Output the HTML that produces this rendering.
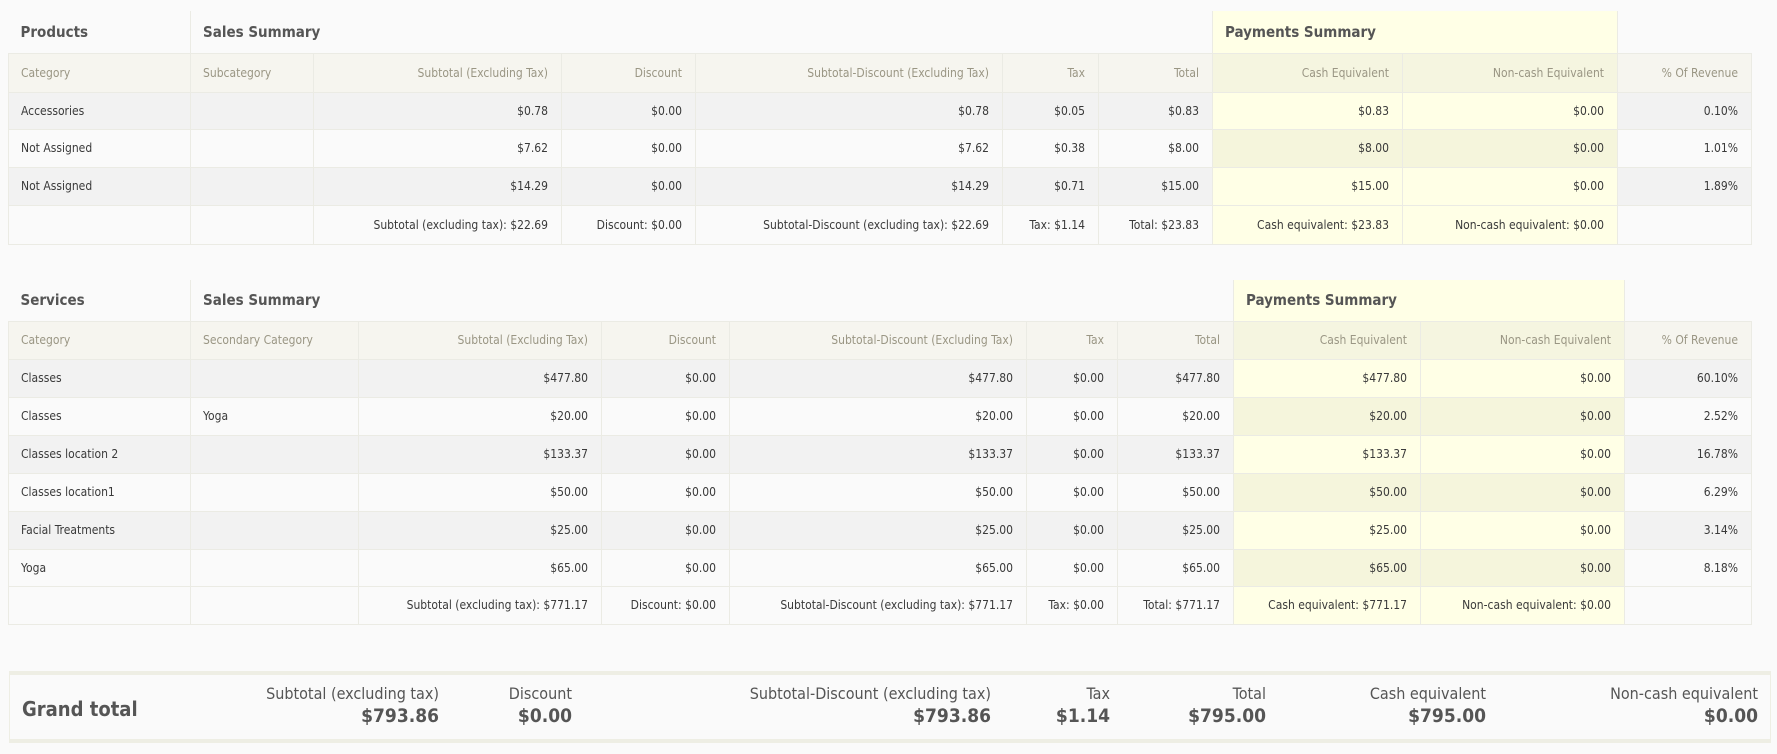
<!DOCTYPE html>
<html><head><meta charset="utf-8"><style>
*{box-sizing:border-box;margin:0;padding:0}
body{width:1777px;height:754px;background:#fafafa;font-family:"DejaVu Sans Condensed","Liberation Sans",sans-serif;color:#3a3a3a;position:relative;overflow:hidden}
table{border-collapse:collapse;table-layout:fixed;position:absolute;left:8px;font-size:12px}
td{border:1px solid #ebebe4;padding:0 13px 0 12px;text-align:right;white-space:nowrap;overflow:hidden}
td.l{text-align:left}
tr.t td{font-weight:bold;font-size:15px;color:#555;border-top:none;background:#fafafa;text-align:left}
tr.t td.n{border:none;border-bottom:1px solid #ebebe4;background:#fafafa}
tr.t td.p{background:#ffffe6}
tr.h td{background:#f6f5ef;color:#9a9684}
tr.o td{background:#f2f2f2}
tr.e td{background:#fafafa}
tr.o td.y{background:#ffffe6}
tr.e td.y{background:#f5f5dc}
tr.h td.y{background:#f5f5e0}
tr.s td{background:#fafafa}
tr.s td.y{background:#ffffe6}
.g{position:absolute;left:9px;top:671px;width:1762px;height:72px;border-top:4px solid #eeeee4;border-bottom:4px solid #eeeee4;border-left:1px solid #eeeee4;border-right:1px solid #eeeee4;background:#fafafa}
.gt{position:absolute;left:12px;top:22px;font-weight:bold;font-size:20px;color:#555}
.c{position:absolute;top:9px;text-align:right;color:#555}
.c div:first-child{font-size:16px;line-height:20px}
.c div:last-child{font-size:19px;font-weight:bold;line-height:24px}
</style></head><body>
<table style="top:11px;width:1743px">
<colgroup><col style="width:182px"><col style="width:123px"><col style="width:248px"><col style="width:134px"><col style="width:307px"><col style="width:96px"><col style="width:114px"><col style="width:190px"><col style="width:215px"><col style="width:134px"></colgroup>
<tr class="t" style="height:42px"><td style="border-left:none">Products</td><td colspan="6">Sales Summary</td><td colspan="2" class="p">Payments Summary</td><td class="n"></td></tr>
<tr class="h" style="height:39px"><td class="l">Category</td><td class="l">Subcategory</td><td>Subtotal (Excluding Tax)</td><td>Discount</td><td>Subtotal-Discount (Excluding Tax)</td><td>Tax</td><td>Total</td><td class="y">Cash Equivalent</td><td class="y">Non-cash Equivalent</td><td>% Of Revenue</td></tr>
<tr class="o" style="height:37px"><td class="l">Accessories</td><td></td><td>$0.78</td><td>$0.00</td><td>$0.78</td><td>$0.05</td><td>$0.83</td><td class="y">$0.83</td><td class="y">$0.00</td><td>0.10%</td></tr>
<tr class="e" style="height:38px"><td class="l">Not Assigned</td><td></td><td>$7.62</td><td>$0.00</td><td>$7.62</td><td>$0.38</td><td>$8.00</td><td class="y">$8.00</td><td class="y">$0.00</td><td>1.01%</td></tr>
<tr class="o" style="height:38px"><td class="l">Not Assigned</td><td></td><td>$14.29</td><td>$0.00</td><td>$14.29</td><td>$0.71</td><td>$15.00</td><td class="y">$15.00</td><td class="y">$0.00</td><td>1.89%</td></tr>
<tr class="s" style="height:39px"><td></td><td></td><td>Subtotal (excluding tax): $22.69</td><td>Discount: $0.00</td><td>Subtotal-Discount (excluding tax): $22.69</td><td>Tax: $1.14</td><td>Total: $23.83</td><td class="y">Cash equivalent: $23.83</td><td class="y">Non-cash equivalent: $0.00</td><td></td></tr>
</table>
<table style="top:280px;width:1743px">
<colgroup><col style="width:182px"><col style="width:168px"><col style="width:243px"><col style="width:128px"><col style="width:297px"><col style="width:91px"><col style="width:116px"><col style="width:187px"><col style="width:204px"><col style="width:127px"></colgroup>
<tr class="t" style="height:41px"><td style="border-left:none">Services</td><td colspan="6">Sales Summary</td><td colspan="2" class="p">Payments Summary</td><td class="n"></td></tr>
<tr class="h" style="height:38px"><td class="l">Category</td><td class="l">Secondary Category</td><td>Subtotal (Excluding Tax)</td><td>Discount</td><td>Subtotal-Discount (Excluding Tax)</td><td>Tax</td><td>Total</td><td class="y">Cash Equivalent</td><td class="y">Non-cash Equivalent</td><td>% Of Revenue</td></tr>
<tr class="o" style="height:38px"><td class="l">Classes</td><td></td><td>$477.80</td><td>$0.00</td><td>$477.80</td><td>$0.00</td><td>$477.80</td><td class="y">$477.80</td><td class="y">$0.00</td><td>60.10%</td></tr>
<tr class="e" style="height:38px"><td class="l">Classes</td><td class="l">Yoga</td><td>$20.00</td><td>$0.00</td><td>$20.00</td><td>$0.00</td><td>$20.00</td><td class="y">$20.00</td><td class="y">$0.00</td><td>2.52%</td></tr>
<tr class="o" style="height:38px"><td class="l">Classes location 2</td><td></td><td>$133.37</td><td>$0.00</td><td>$133.37</td><td>$0.00</td><td>$133.37</td><td class="y">$133.37</td><td class="y">$0.00</td><td>16.78%</td></tr>
<tr class="e" style="height:38px"><td class="l">Classes location1</td><td></td><td>$50.00</td><td>$0.00</td><td>$50.00</td><td>$0.00</td><td>$50.00</td><td class="y">$50.00</td><td class="y">$0.00</td><td>6.29%</td></tr>
<tr class="o" style="height:38px"><td class="l">Facial Treatments</td><td></td><td>$25.00</td><td>$0.00</td><td>$25.00</td><td>$0.00</td><td>$25.00</td><td class="y">$25.00</td><td class="y">$0.00</td><td>3.14%</td></tr>
<tr class="e" style="height:37px"><td class="l">Yoga</td><td></td><td>$65.00</td><td>$0.00</td><td>$65.00</td><td>$0.00</td><td>$65.00</td><td class="y">$65.00</td><td class="y">$0.00</td><td>8.18%</td></tr>
<tr class="s" style="height:38px"><td></td><td></td><td>Subtotal (excluding tax): $771.17</td><td>Discount: $0.00</td><td>Subtotal-Discount (excluding tax): $771.17</td><td>Tax: $0.00</td><td>Total: $771.17</td><td class="y">Cash equivalent: $771.17</td><td class="y">Non-cash equivalent: $0.00</td><td></td></tr>
</table>
<div class="g">
<div class="gt">Grand total</div>
<div class="c" style="right:1331px"><div>Subtotal (excluding tax)</div><div>$793.86</div></div>
<div class="c" style="right:1198px"><div>Discount</div><div>$0.00</div></div>
<div class="c" style="right:779px"><div>Subtotal-Discount (excluding tax)</div><div>$793.86</div></div>
<div class="c" style="right:660px"><div>Tax</div><div>$1.14</div></div>
<div class="c" style="right:504px"><div>Total</div><div>$795.00</div></div>
<div class="c" style="right:284px"><div>Cash equivalent</div><div>$795.00</div></div>
<div class="c" style="right:12px"><div>Non-cash equivalent</div><div>$0.00</div></div>
</div>
</body></html>
